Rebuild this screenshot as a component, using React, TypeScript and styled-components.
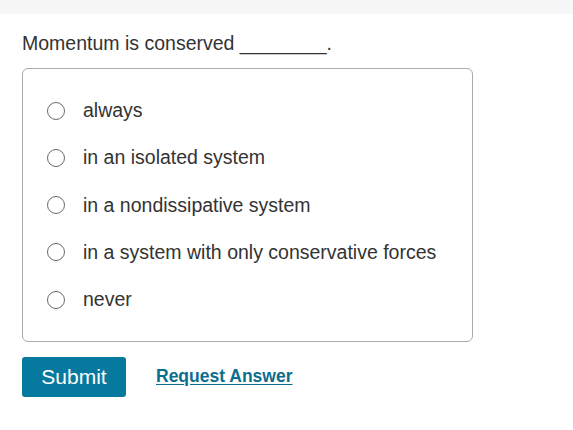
import React from 'react';
import styled, { createGlobalStyle } from 'styled-components';

const GlobalStyle = createGlobalStyle`
  html, body {
    margin: 0;
    padding: 0;
    background: #fff;
    font-family: Arial, "Liberation Sans", sans-serif;
    color: #333;
  }
`;

const TopBar = styled.div`
  height: 14px;
  background: #f7f7f7;
`;

const Content = styled.div`
  padding: 0 22px;
  width: 451px;
`;

const Question = styled.p`
  margin: 17px 0 0;
  font-size: 19.5px;
  line-height: 24px;
  color: #333;
`;

const Choices = styled.div`
  margin-top: 13px;
  border: 1px solid #aaa;
  border-radius: 6px;
  padding: 18px 0 18px 24px;
  display: flex;
  flex-direction: column;
`;

const Choice = styled.label`
  height: 47.25px;
  display: flex;
  align-items: center;
  gap: 18px;
  font-size: 19.5px;
  color: #333;
  cursor: pointer;
`;

const Radio = styled.span`
  width: 18px;
  height: 18px;
  box-sizing: border-box;
  border: 1.5px solid #6b6b6b;
  border-radius: 50%;
  flex: none;
`;

const Actions = styled.div`
  margin-top: 15px;
  display: flex;
  align-items: center;
  gap: 30px;
`;

const SubmitButton = styled.button`
  width: 104px;
  height: 40px;
  border: none;
  border-radius: 3px;
  background: #067a9e;
  color: #fff;
  font-family: Arial, "Liberation Sans", sans-serif;
  font-size: 21px;
  cursor: pointer;
`;

const RequestLink = styled.a`
  color: #0b6e8e;
  font-weight: bold;
  font-size: 17.5px;
  text-decoration: underline;
  text-underline-offset: 2px;
  margin-bottom: 2px;
`;

const options = [
  'always',
  'in an isolated system',
  'in a nondissipative system',
  'in a system with only conservative forces',
  'never',
];

function App() {
  return (
    <>
      <GlobalStyle />
      <TopBar />
      <Content>
        <Question>Momentum is conserved ________.</Question>
        <Choices>
          {options.map((o) => (
            <Choice key={o}>
              <Radio />
              {o}
            </Choice>
          ))}
        </Choices>
        <Actions>
          <SubmitButton>Submit</SubmitButton>
          <RequestLink href="#">Request Answer</RequestLink>
        </Actions>
      </Content>
    </>
  );
}

export default App;
